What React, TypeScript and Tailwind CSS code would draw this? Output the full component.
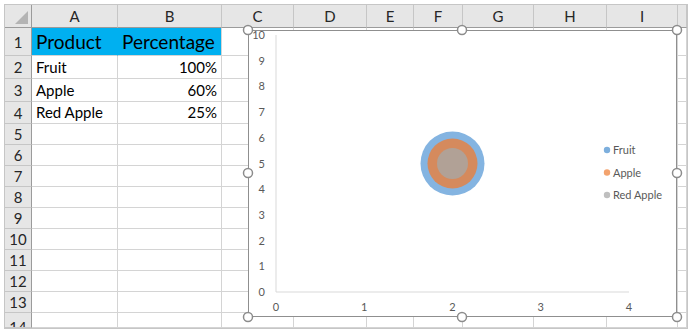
const cols = ["A", "B", "C", "D", "E", "F", "G", "H", "I", ""]
const colW = [86, 104, 72, 73, 47, 49, 71, 73, 71, 9]
const rowH = [28, 23, 23, 22, 21, 21, 21, 21, 21, 21, 21, 21, 21, 15]

const data: [string, string][] = [
  ["Fruit", "100%"],
  ["Apple", "60%"],
  ["Red Apple", "25%"],
]

const font = { fontFamily: "Lato, 'Liberation Sans', sans-serif" }

function Chart() {
  const x0 = 28
  const y0 = 262
  const xs = 88.25
  const ys = 25.7
  const handles = [
    [0, 0], [214, 0], [429, 0],
    [0, 143], [429, 143],
    [0, 287], [214, 287], [429, 287],
  ]
  const legend = [
    ["Fruit", "#7dafdd"],
    ["Apple", "#f3a36e"],
    ["Red Apple", "#bfbfbf"],
  ]
  return (
    <div className="absolute left-[248px] top-[30px] w-[429px] h-[287px] bg-white border border-[#8f8f8f]">
      <svg
        width={429}
        height={287}
        className="absolute -left-px -top-px overflow-visible"
        style={{ fontFamily: "Lato, 'Liberation Sans', sans-serif" }}
      >
        <line x1={x0} y1={5} x2={x0} y2={y0} stroke="#d9d9d9" />
        <line x1={x0} y1={y0} x2={x0 + 4 * xs} y2={y0} stroke="#d9d9d9" />
        {Array.from({ length: 11 }, (_, i) => (
          <text key={i} x={17} y={y0 - i * ys + 4} fontSize={11} fill="#595959" textAnchor="end">
            {i}
          </text>
        ))}
        {Array.from({ length: 5 }, (_, i) => (
          <text key={i} x={x0 + i * xs} y={281} fontSize={11} fill="#595959" textAnchor="middle">
            {i}
          </text>
        ))}
        <circle cx={x0 + 2 * xs} cy={y0 - 5 * ys} r={32} fill="#84b4e1" />
        <circle cx={x0 + 2 * xs} cy={y0 - 5 * ys} r={25} fill="#d58a5d" />
        <circle cx={x0 + 2 * xs} cy={y0 - 5 * ys} r={15.5} fill="#b1a196" />
        {legend.map(([name, c], i) => (
          <g key={name}>
            <circle cx={359} cy={120 + i * 22.5} r={3.2} fill={c} />
            <text x={365} y={124 + i * 22.5} fontSize={11} fill="#595959">
              {name}
            </text>
          </g>
        ))}
        {handles.map(([x, y], i) => (
          <circle key={i} cx={x} cy={y} r={4.5} fill="white" stroke="#8c8c8c" strokeWidth={1.5} />
        ))}
      </svg>
    </div>
  )
}

export default function App() {
  return (
    <div className="relative w-[690px] h-[332px] bg-white overflow-hidden" style={font}>
      <div className="absolute left-[4px] top-[4px] border border-[#c6c6c6] overflow-hidden">
        <div
          className="grid"
          style={{
            gridTemplateColumns: `27px ${colW.map((w) => w + "px").join(" ")}`,
            gridTemplateRows: `23px ${rowH.map((h) => h + "px").join(" ")}`,
          }}
        >
          {/* corner */}
          <div className="relative bg-[#e6e6e6] border-r border-b border-[#9b9b9b]">
            <div className="absolute right-[3px] bottom-[3px] w-0 h-0 border-l-[13px] border-l-transparent border-b-[13px] border-b-[#b4b4b4]" />
          </div>
          {cols.map((c, i) => (
            <div
              key={i}
              className="flex items-center justify-center bg-[#e6e6e6] border-r border-b border-r-[#c6c6c6] border-b-[#9b9b9b] text-[15px] text-[#262626]"
            >
              {c}
            </div>
          ))}
          {rowH.map((_, r) => (
            <Row key={r} r={r} />
          ))}
        </div>
      </div>
      <Chart />
    </div>
  )
}

function Row({ r }: { r: number }) {
  const last = r === rowH.length - 1
  const cells = cols.map((_, ci) => {
    let content: string = ""
    let cls = "border-r border-b border-[#d4d4d4] flex items-end pb-[1px] px-[4px] text-black whitespace-nowrap overflow-hidden"
    if (r === 0 && ci < 2) {
      content = ci === 0 ? "Product" : "Percentage"
      cls += " bg-[#00b0f0] text-[19px] leading-[24px]"
      if (ci === 0) cls += " border-r-[#00b0f0]"
    } else if (r >= 1 && r <= 3 && ci < 2) {
      content = data[r - 1][ci]
      cls += " text-[15px] leading-[20px]"
      if (ci === 1) cls += " justify-end"
    }
    return (
      <div key={ci} className={cls}>
        {content}
      </div>
    )
  })
  return (
    <>
      <div
        className={`flex justify-center overflow-hidden bg-[#e6e6e6] border-r border-b border-r-[#9b9b9b] border-b-[#c6c6c6] text-[15px] leading-[20px] text-[#262626] ${
          last ? "items-start pt-[4px]" : "items-center"
        }`}
      >
        {r + 1}
      </div>
      {cells}
    </>
  )
}
